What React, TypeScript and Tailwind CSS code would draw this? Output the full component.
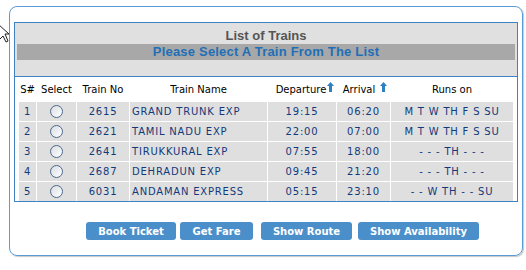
import React from 'react';

const trains = [
  { n: 1, no: '2615', name: 'GRAND TRUNK EXP', dep: '19:15', arr: '06:20', runs: 'M T W TH F S SU' },
  { n: 2, no: '2621', name: 'TAMIL NADU EXP', dep: '22:00', arr: '07:00', runs: 'M T W TH F S SU' },
  { n: 3, no: '2641', name: 'TIRUKKURAL EXP', dep: '07:55', arr: '18:00', runs: '- - - TH - - -' },
  { n: 4, no: '2687', name: 'DEHRADUN EXP', dep: '09:45', arr: '21:20', runs: '- - - TH - - -' },
  { n: 5, no: '6031', name: 'ANDAMAN EXPRESS', dep: '05:15', arr: '23:10', runs: '- - W TH - - SU' },
];

const SortArrow = () => (
  <svg width="7" height="10" viewBox="0 0 7 10" className="ml-[1px] -mt-[4px]">
    <path d="M3.5 0 L7 4 L5 4 L5 10 L2 10 L2 4 L0 4 Z" fill="#2f7fc1" />
  </svg>
);

const Radio = () => (
  <span className="block w-[13px] h-[13px] rounded-full border border-[#4d6a8c] bg-gradient-to-br from-[#d8dde3] to-white" />
);

const cell = 'bg-[#dfdfdf] h-[19px] flex items-center';
const grid = 'grid grid-cols-[17px_39px_52px_137px_68px_53px_122px] gap-[1px]';

export default function App() {
  return (
    <div
      className="relative w-[526px] h-[270px] bg-white pt-[6px] pl-[9px]"
      style={{ fontFamily: '"DejaVu Sans", Verdana, sans-serif' }}
    >
      {/* mouse pointer at the left edge */}
      <svg width="12" height="22" viewBox="0 0 12 22" className="absolute left-0 top-[24px]">
        <path d="M-2 0 L9 10 L5 10 L8 17 L6 18 L3 12 L0 15" fill="white" stroke="#222" strokeWidth="1" />
      </svg>

      <div className="w-[514px] h-[250px] border border-[#5b9bd5] rounded-[8px] shadow-[1px_1px_1px_#c8c8c8] pt-[15px] pl-[4px]">
        {/* inner list panel */}
        <div className="w-[504px] h-[180px] border border-[#3f82c3] bg-white">
          <div className="h-[53px] bg-[#e0e0e0] px-[2px] pt-[5px]" style={{ fontFamily: '"Liberation Sans", Arial, sans-serif' }}>
            <div className="h-[16px] text-center text-[13px] font-bold text-[#555] leading-[16px]">List of Trains</div>
            <div className="h-[16px] bg-[#a8a8a8] text-center text-[13px] font-bold text-[#1f6fb7] tracking-[0.2px] leading-[16px]">
              Please Select A Train From The List
            </div>
          </div>
          <div className="h-[1px] bg-[#3f82c3]" />

          <div className="pl-[4px] pt-0">
            <div className={`${grid} h-[24px] items-center text-[10px] text-black`}>
              <div className="text-center">S#</div>
              <div className="text-center">Select</div>
              <div className="text-center">Train No</div>
              <div className="text-center">Train Name</div>
              <div className="flex items-center justify-center pl-[6px]">Departure<SortArrow /></div>
              <div className="flex items-center justify-center pl-[3px]">Arrival<span className="ml-[4px] flex"><SortArrow /></span></div>
              <div className="text-center">Runs on</div>
            </div>
            <div className={`${grid} mt-[1px] text-[10px] text-[#12397a] tracking-[0.8px]`}>
              {trains.map((t) => (
                <React.Fragment key={t.n}>
                  <div className={`${cell} justify-center`}>{t.n}</div>
                  <div className={`${cell} justify-center`}><Radio /></div>
                  <div className={`${cell} justify-center`}>{t.no}</div>
                  <div className={`${cell} pl-[2px]`}>{t.name}</div>
                  <div className={`${cell} justify-center`}>{t.dep}</div>
                  <div className={`${cell} justify-center`}>{t.arr}</div>
                  <div className={`${cell} justify-center`}>{t.runs}</div>
                </React.Fragment>
              ))}
            </div>
          </div>
        </div>

        {/* action buttons */}
        <div className="flex mt-[20px] pl-[72px] text-[10px] font-bold text-white">
          <button className="w-[90px] h-[18px] rounded-[3px] bg-[#4b8fca]">Book Ticket</button>
          <button className="ml-[4px] w-[73px] h-[18px] rounded-[3px] bg-[#4b8fca]">Get Fare</button>
          <button className="ml-[8px] w-[91px] h-[18px] rounded-[3px] bg-[#4b8fca]">Show Route</button>
          <button className="ml-[6px] w-[121px] h-[18px] rounded-[3px] bg-[#4b8fca]">Show Availability</button>
        </div>
      </div>
    </div>
  );
}
